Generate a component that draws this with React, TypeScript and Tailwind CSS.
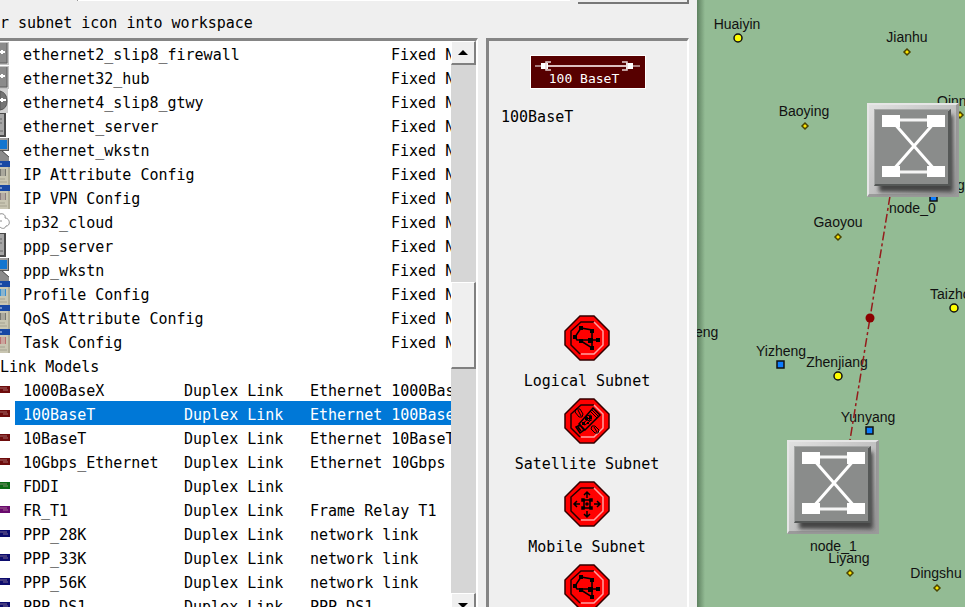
import React from "react";
import clsx from "clsx";

type IconKind = "box" | "router" | "server" | "wkstn" | "config" | "cloud" | "link";

interface IModel {
	name: string;
	icon: IconKind;
	color?: string;
	type?: string;
	desc?: string;
}

const nodeModels: IModel[] = [
	{ name: "ethernet2_slip8_firewall", icon: "box" },
	{ name: "ethernet32_hub", icon: "box" },
	{ name: "ethernet4_slip8_gtwy", icon: "router" },
	{ name: "ethernet_server", icon: "server" },
	{ name: "ethernet_wkstn", icon: "wkstn" },
	{ name: "IP Attribute Config", icon: "config", color: "#777770" },
	{ name: "IP VPN Config", icon: "config", color: "#8c7f7f" },
	{ name: "ip32_cloud", icon: "cloud" },
	{ name: "ppp_server", icon: "server" },
	{ name: "ppp_wkstn", icon: "wkstn" },
	{ name: "Profile Config", icon: "config", color: "#3a8fd0" },
	{ name: "QoS Attribute Config", icon: "config", color: "#777770" },
	{ name: "Task Config", icon: "config", color: "#b87070" },
];

const linkModels: IModel[] = [
	{ name: "1000BaseX", icon: "link", color: "#6e0c0c", type: "Duplex Link", desc: "Ethernet 1000Bas" },
	{ name: "100BaseT", icon: "link", color: "#6e0c0c", type: "Duplex Link", desc: "Ethernet 100Base" },
	{ name: "10BaseT", icon: "link", color: "#6e0c0c", type: "Duplex Link", desc: "Ethernet 10BaseT" },
	{ name: "10Gbps_Ethernet", icon: "link", color: "#6e0c0c", type: "Duplex Link", desc: "Ethernet 10Gbps" },
	{ name: "FDDI", icon: "link", color: "#0a6a14", type: "Duplex Link" },
	{ name: "FR_T1", icon: "link", color: "#6a0a6e", type: "Duplex Link", desc: "Frame Relay T1" },
	{ name: "PPP_28K", icon: "link", color: "#0c0c6e", type: "Duplex Link", desc: "network link" },
	{ name: "PPP_33K", icon: "link", color: "#0c0c6e", type: "Duplex Link", desc: "network link" },
	{ name: "PPP_56K", icon: "link", color: "#0c0c6e", type: "Duplex Link", desc: "network link" },
	{ name: "PPP_DS1", icon: "link", color: "#0c0c6e", type: "Duplex Link", desc: "PPP_DS1" },
];

const RowIcon = ({ kind, color }: { kind: IconKind; color?: string }) => (
	<svg width="10" height="24" viewBox="0 0 10 24" className="block" aria-hidden="true">
		{kind === "box" && (
			<>
				<rect width="9" height="23" y="1" fill="#c4c4c4" />
				<rect width="7" height="20" y="2" fill="#8b8b8b" />
				<path d="M7 2v20H0" fill="none" stroke="#5c5c5c" />
				<path d="M0 11h5M2 9v4" fill="none" stroke="#fff" strokeWidth="2" />
			</>
		)}
		{kind === "router" && (
			<>
				<rect width="8" height="24" fill="#cfcfcf" />
				<path d="M0 2q7 2 7 10t-7 9z" fill="#747474" stroke="#555" />
				<path d="M0 11h6M2 9v4" fill="none" stroke="#fff" strokeWidth="2" />
			</>
		)}
		{kind === "server" && (
			<>
				<rect width="6" height="24" fill="#4a4a4a" />
				<rect width="4" height="21" y="1" fill="#a6a6a6" />
				<path d="M0 6h2M0 10h2M0 18h3" stroke="#666" />
			</>
		)}
		{kind === "wkstn" && (
			<>
				<rect width="9" height="13" y="1" fill="#555" />
				<rect width="8" height="12" y="1" fill="#9a9a9a" />
				<rect width="7" height="9" y="3" fill="#1476d0" />
				<path d="M0 14h3l6 6v4H0z" fill="#8b8b8b" />
				<path d="M2 14l7 6" stroke="#555" />
			</>
		)}
		{kind === "config" && (
			<>
				<rect width="10" height="24" fill="#c9c6b2" />
				<rect width="10" height="6" fill="#1848a4" />
				<path d="M0 3h2" stroke="#cfdcf5" />
				<rect width="6" height="7" y="8" fill={color} />
				<path d="M2 8v7M4 8v7" stroke="#ddd9c8" />
				<path d="M0 18h5M0 21h7" stroke="#a5a290" />
				<path d="M9 6v18" stroke="#98957f" />
			</>
		)}
		{kind === "cloud" && (
			<path d="M0 5c3-1 6 1 5 4 5 0 6 8 1 8-1 3-4 3-6 1M0 12h2" fill="none" stroke="#8c8c8c" />
		)}
		{kind === "link" && (
			<>
				<rect width="10" height="7" y="9" fill={color} />
				<path d="M0 11h7M3 13h5" stroke="#c9a9a9" strokeOpacity=".6" />
			</>
		)}
	</svg>
);

const ModelRow = ({ model, selected }: { model: IModel; selected?: boolean }) => {
	const cell = clsx("pt-1 pb-0 pl-2 pr-0 leading-5", selected && "bg-[#0078d7] text-white");
	return (
		<tr className="h-6" aria-selected={selected}>
			<td className="p-0">
				<RowIcon kind={model.icon} color={model.color} />
			</td>
			<td className={cell}>{model.name}</td>
			<td className={cell}>{model.type}</td>
			<td className={clsx(cell, "overflow-hidden")}>
				{model.type ? model.desc : <span className="pl-[81px]">Fixed N</span>}
			</td>
		</tr>
	);
};

const ScrollButton = ({ label, path }: { label: string; path: string }) => (
	<button
		aria-label={label}
		className="h-6 w-full border-t border-r-2 border-b-2 border-l border-t-white border-r-[#808080] border-b-[#808080] border-l-white bg-[#efefef]"
	>
		<svg width="22" height="21" viewBox="0 0 22 21">
			<path d={path} fill="#000" />
		</svg>
	</button>
);

const ModelList = () => (
	<div className="flex min-w-0 flex-1 border-t-3 border-r-2 border-t-[#858585] border-r-white bg-white">
		<div className="min-w-0 flex-1 overflow-hidden">
			<table className="w-full table-fixed border-collapse text-left whitespace-nowrap">
				<colgroup>
					<col className="w-[15px]" />
					<col className="w-[161px]" />
					<col className="w-[126px]" />
					<col />
				</colgroup>
				<tbody>
					{nodeModels.map((m) => (
						<ModelRow key={m.name} model={m} />
					))}
					<tr className="h-6">
						<td colSpan={4} className="p-0 pt-1 leading-5">
							Link Models
						</td>
					</tr>
					{linkModels.map((m) => (
						<ModelRow key={m.name} model={m} selected={m.name === "100BaseT"} />
					))}
				</tbody>
			</table>
		</div>
		<div className="flex w-[25px] shrink-0 flex-col bg-[#d6d6d6]">
			<ScrollButton label="Scroll up" path="M6 13l5-5 5 5z" />
			<div className="h-[217px]" />
			<div className="h-[87px] border-t border-r-2 border-b-2 border-l border-t-white border-r-[#808080] border-b-[#808080] border-l-white bg-[#efefef]" />
			<div className="flex-1" />
			<ScrollButton label="Scroll down" path="M6 9l5 5 5-5z" />
		</div>
	</div>
);

const LinkBadge = () => (
	<svg width="116" height="34" viewBox="0 0 116 34" className="block">
		<rect width="116" height="34" fill="#fff" />
		<rect x="1" y="1" width="114" height="32" fill="#570000" />
		<path d="M5 11h8M102 11h8" stroke="#fff" />
		<path d="M18 11h80" stroke="#dcc0c0" strokeWidth="2" />
		<path d="M11 8h7v6h-7zM96 8h7v6h-7z" fill="#fff" />
		<path d="M21 7h-5v8h5M92 7h5v8h-5" fill="none" stroke="#e8d4d4" strokeWidth="1.5" />
		<text
			x="54"
			y="28"
			textAnchor="middle"
			fill="#fff"
			className="font-['DejaVu_Sans_Mono',monospace] text-[13px]"
		>
			100 BaseT
		</text>
	</svg>
);

const glyphs = {
	logical: (
		<>
			<path
				d="M17 13l11 2v11M17 13l-6 9 2 3h21M17 26l11 7v-7"
				fill="none"
				stroke="#000"
				strokeWidth="1.5"
			/>
			<path
				d="M15 11h4v4h-4zM26 14h4v4h-4zM9 20h4v4H9zM15 24h4v4h-4zM24 23h5v5h-5zM32 23h4v4h-4zM26 31h4v4h-4z"
				fill="#000"
			/>
		</>
	),
	satellite: (
		<g fill="none" stroke="#000">
			<path d="M29 10l7 7-15 15-6-6z" strokeWidth="1.5" />
			<path d="M26 13l7 7M28 12l6 6" />
			<path d="M16 27l-4 2 4 6 4-3zM14 29l3 4" strokeWidth="1.5" />
			<path d="M12 11h4l3 5-1 3h-3l-4-5zM14 12l3 6" />
			<path d="M28 28h3l4 4-1 3h-3l-4-4zM30 29l3 5" />
			<path d="M22 18l5-1v6zM18 26l5-4 3 1-5 4z" />
			<path d="M21 19h3v3h-3zM18 24h3v3h-3zM25 18h3v3h-3zM23 24h2v2h-2z" fill="#000" stroke="none" />
		</g>
	),
	mobile: (
		<g fill="none" stroke="#000" strokeWidth="1.5">
			<path d="M23 17v-6M20 14l3-3 3 3M23 30v6M20 33l3 3 3-3M16 23h-6M13 20l-3 3 3 3M30 23h6M33 20l3 3-3 3" />
			<path d="M20 19h6v8h-6z" />
			<path d="M18 18h2v2h-2zM26 18h2v2h-2zM18 26h2v2h-2zM26 26h2v2h-2z" fill="#000" />
			<circle cx="23" cy="23" r="1" />
		</g>
	),
};

const SubnetIcon = ({ kind }: { kind: keyof typeof glyphs }) => (
	<svg width="46" height="46" viewBox="0 0 46 46" className="block">
		<path d="M16 1h14l15 15v14L30 45H16L1 30V16z" fill="#f00" stroke="#300" strokeWidth="1.5" />
		<path d="M16 39L7 30V16l10-9h13" fill="none" stroke="#200" strokeWidth="1.5" />
		<path d="M30 7l9 9v14l-9 9H17" fill="none" stroke="#ffa0a0" strokeWidth="1.5" />
		{glyphs[kind]}
	</svg>
);

const subnets: { label: string; kind: keyof typeof glyphs }[] = [
	{ label: "Logical Subnet", kind: "logical" },
	{ label: "Satellite Subnet", kind: "satellite" },
	{ label: "Mobile Subnet", kind: "mobile" },
];

const Preview = () => (
	<div className="flex w-[203px] shrink-0 flex-col border-t-3 border-r-2 border-l-3 border-t-[#858585] border-r-white border-l-[#858585]">
		<div className="flex flex-col items-center pt-3.5">
			<LinkBadge />
		</div>
		<p className="pt-4 pl-3 leading-6">100BaseT</p>
		<div className="mt-[186px] flex flex-col items-center gap-[5px] pr-0.5">
			{subnets.map((s) => (
				<button key={s.label} className="flex flex-col items-center gap-2">
					<SubnetIcon kind={s.kind} />
					<span className="leading-6">{s.label}</span>
				</button>
			))}
			<button aria-label="Subnet">
				<SubnetIcon kind="logical" />
			</button>
		</div>
	</div>
);

const Palette = () => (
	<section className="min-w-0 flex-1 overflow-hidden bg-[#efefef] font-['DejaVu_Sans_Mono',monospace] text-[15px] text-black">
		<div className="flex h-3 items-start pr-2 pl-[77px]">
			<div className="h-px min-w-0 flex-1 border-l border-l-[#999] bg-white" />
			<div className="ml-2 h-1 w-[111px] border-r-2 border-b-2 border-[#777] bg-[#efefef]" />
		</div>
		<p className="h-[26px] pt-px leading-5 whitespace-nowrap">r subnet icon into workspace</p>
		<div className="flex gap-2 pr-2">
			<ModelList />
			<Preview />
		</div>
	</section>
);

type Shape = "circle" | "diamond" | "square";

interface ICity {
	name: string;
	x: number;
	y: number;
	anchor?: "start" | "middle";
	marker?: [Shape, number, number];
}

const cities: ICity[] = [
	{ name: "Huaiyin", x: 40, y: 29, marker: ["circle", 41, 38] },
	{ name: "Jianhu", x: 210, y: 42, marker: ["diamond", 210, 52] },
	{ name: "Qinn", x: 240, y: 106, anchor: "start", marker: ["diamond", 263, 115] },
	{ name: "Baoying", x: 107, y: 116, marker: ["diamond", 108, 126] },
	{ name: "g", x: 260, y: 190, anchor: "start", marker: ["square", 236, 197] },
	{ name: "Gaoyou", x: 141, y: 227, marker: ["diamond", 141, 237] },
	{ name: "Taizho", x: 233, y: 299, anchor: "start", marker: ["circle", 257, 308] },
	{ name: "eng", x: -2, y: 337, anchor: "start" },
	{ name: "Yizheng", x: 84, y: 356, marker: ["square", 83, 364] },
	{ name: "Zhenjiang", x: 140, y: 367, marker: ["circle", 141, 376] },
	{ name: "Yunyang", x: 171, y: 422, marker: ["square", 172, 430] },
	{ name: "Liyang", x: 152, y: 563, marker: ["diamond", 153, 573] },
	{ name: "Dingshu", x: 239, y: 578, marker: ["diamond", 240, 588] },
];

const Marker = ({ shape, x, y }: { shape: Shape; x: number; y: number }) => (
	<g transform={`translate(${x} ${y})`} stroke="#111">
		{shape === "circle" && <circle r="4" fill="#ff0" strokeWidth="1.5" />}
		{shape === "diamond" && (
			<>
				<path d="M0-3L3 0 0 3-3 0z" fill="#f5e000" stroke="#4a4400" strokeWidth="1.5" />
				<path d="M-1 0h2M0-1v2" stroke="#ffe800" />
			</>
		)}
		{shape === "square" && <rect x="-3" y="-3" width="7" height="7" fill="#0a7cff" strokeWidth="1.5" />}
	</g>
);

const SwitchNode = ({ x, y }: { x: number; y: number }) => (
	<g transform={`translate(${x} ${y})`}>
		<rect width="92" height="94" fill="url(#frame)" />
		<path d="M0 94V0h92l-2 2H2v90z" fill="#e6e6e6" />
		<path d="M92 0v94H0l2-3h87V2z" fill="#9a9a9a" />
		<rect x="12" y="12" width="74" height="77" fill="#444" filter="url(#soft)" />
		<rect x="7" y="6" width="77" height="77" fill="#555857" />
		<path d="M7 83V6h77l-4 3H9v71z" fill="#a5a7a6" />
		<rect x="8" y="7" width="73" height="74" fill="#8a8c8b" />
		<path d="M28 17h38M28 69h38" stroke="#f5f5f5" strokeWidth="3" />
		<path d="M26 19l42 48M68 19L26 67" stroke="#fff" strokeWidth="3" />
		<path d="M15 12h18v12H15zM60 12h18v12H60zM15 63h18v11H15zM60 63h18v11H60z" fill="#fff" />
	</g>
);

const NetworkMap = () => (
	<section className="relative w-[268px] shrink-0 overflow-hidden bg-[#93bb94]">
		<svg
			className="absolute inset-0 h-full w-full font-['Liberation_Sans',Arial,sans-serif] text-[14px]"
			role="img"
			aria-label="Network map"
		>
			<defs>
				<linearGradient id="frame" x1="0" y1="0" x2="1" y2="1">
					<stop offset="0" stopColor="#e2e2e2" />
					<stop offset=".5" stopColor="#c2c2c2" />
					<stop offset="1" stopColor="#959595" />
				</linearGradient>
				<linearGradient id="edge">
					<stop offset="0" stopColor="#1d3a20" stopOpacity=".45" />
					<stop offset="1" stopColor="#1d3a20" stopOpacity="0" />
				</linearGradient>
				<filter id="soft">
					<feGaussianBlur stdDeviation="2" />
				</filter>
			</defs>
			<rect width="8" height="100%" fill="url(#edge)" />
			{cities.map((c) => (
				<g key={c.name}>
					<text x={c.x} y={c.y} textAnchor={c.anchor ?? "middle"} fill="#111">
						{c.name}
					</text>
					{c.marker && <Marker shape={c.marker[0]} x={c.marker[1]} y={c.marker[2]} />}
				</g>
			))}
			<path d="M193 196L153 440" stroke="#951c1c" strokeWidth="1.5" strokeDasharray="9 3 3 3" />
			<circle cx="173" cy="318" r="4.5" fill="#8b0000" />
			<SwitchNode x={170} y={103} />
			<SwitchNode x={90} y={440} />
			<text x="192" y="213" fill="#111">
				node_0
			</text>
			<text x="113" y="551" fill="#111">
				node_1
			</text>
		</svg>
	</section>
);

export default function App() {
	return (
		<main className="flex h-screen overflow-hidden">
			<Palette />
			<NetworkMap />
		</main>
	);
}
